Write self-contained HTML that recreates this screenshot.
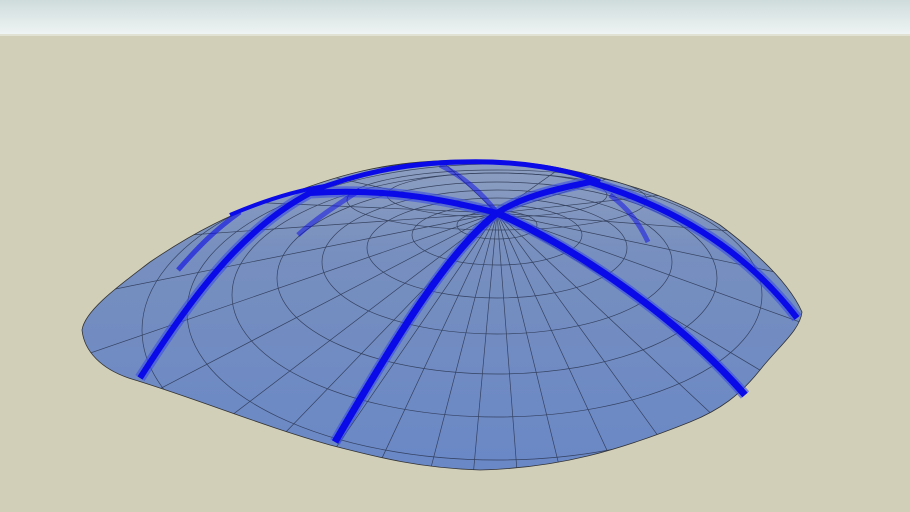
<!DOCTYPE html>
<html><head><style>
html,body{margin:0;padding:0;width:910px;height:512px;overflow:hidden;background:#d2cfb9}
.top{position:absolute;left:0;top:0;width:910px;height:34px;background:linear-gradient(#cfdcdc,#eef3f3)}
.line{position:absolute;left:0;top:34px;width:910px;height:2px;background:#e2e2d4}
svg{position:absolute;left:0;top:0}
</style></head><body>
<div class="top"></div><div class="line"></div>
<svg width="910" height="512" viewBox="0 0 910 512">
<defs>
<clipPath id="d"><path id="dp" d="M82,330 C85,310 120,285 150,262 C190,235 230,212 300,190 C340,175 380,165 420,162 C470,158 520,160 560,168 C620,180 680,200 720,225 C760,255 790,285 802,312 C800,330 780,345 760,370 C740,395 720,410 690,422 C620,450 560,468 480,470 C420,468 380,458 330,445 C260,425 200,400 135,380 C100,370 84,350 82,330 Z"/></clipPath>
<linearGradient id="g" x1="0" y1="0" x2="0" y2="1">
<stop offset="0" stop-color="#8e9fc0"/><stop offset="0.3" stop-color="#778fbf"/><stop offset="1" stop-color="#6a88c6"/>
</linearGradient>
</defs>
<use href="#dp" fill="url(#g)"/>
<g clip-path="url(#d)" stroke="#2a3550" stroke-width="0.7" fill="none" opacity="0.85">
<path d="M497,213 L60,300 M497,213 L70,360 M497,213 L100,420 M497,213 L160,470 M497,213 L230,490 M497,213 L300,500 M497,213 L360,505 M497,213 L420,510 M497,213 L470,510 M497,213 L520,510 M497,213 L570,510 M497,213 L630,500 M497,213 L690,480 M497,213 L750,450 M497,213 L810,400 M497,213 L850,340 M497,213 L860,290 M497,213 L850,240 M497,213 L800,180 M497,213 L300,170 M497,213 L200,200 M497,213 L120,240 M497,213 L700,150 M497,213 L600,140 M497,213 L420,140"/>
<ellipse cx="497" cy="225" rx="40" ry="14"/>
<ellipse cx="497" cy="235" rx="85" ry="30"/>
<ellipse cx="497" cy="248" rx="130" ry="50"/>
<ellipse cx="497" cy="262" rx="175" ry="72"/>
<ellipse cx="497" cy="278" rx="220" ry="96"/>
<ellipse cx="497" cy="295" rx="265" ry="122"/>
<ellipse cx="497" cy="312" rx="310" ry="148"/>
<ellipse cx="497" cy="330" rx="355" ry="172"/>
<ellipse cx="497" cy="200" rx="150" ry="30"/>
<ellipse cx="497" cy="195" rx="110" ry="22"/>
</g>
<use href="#dp" fill="none" stroke="#333" stroke-width="0.8"/>
<g fill="none" stroke-linecap="butt">
<g stroke="#3a4ee0" stroke-width="11" opacity="0.6">
<path d="M335,442 C400,330 450,250 497,213"/>
<path d="M745,395 C680,320 580,250 497,213"/>
<path d="M140,378 C190,300 240,230 310,193 C380,188 440,198 497,213"/>
<path d="M797,318 C760,270 700,215 590,182 C550,190 520,198 497,213"/>
</g>
<g stroke="#0a0ae8">
<path d="M335,442 C400,330 450,250 497,213" stroke-width="7"/>
<path d="M745,395 C680,320 580,250 497,213" stroke-width="7"/>
<path d="M140,378 C190,300 240,230 310,193 C380,188 440,198 497,213" stroke-width="6"/>
<path d="M797,318 C760,270 700,215 590,182 C550,190 520,198 497,213" stroke-width="6"/>
<path d="M310,192 C360,172 410,163 460,162 C520,160 570,170 600,182" stroke-width="5"/>
<path d="M230,215 C270,198 300,190 325,186" stroke-width="4"/>
<path d="M178,270 C200,245 215,230 240,212" stroke-width="5" opacity="0.6"/>
<path d="M298,235 C320,215 345,200 360,190" stroke-width="5" opacity="0.5"/>
<path d="M440,165 C460,175 480,190 497,213" stroke-width="5" opacity="0.5"/>
<path d="M648,242 C640,225 630,210 610,195" stroke-width="5" opacity="0.5"/>
</g>
</g>
</svg>
</body></html>
